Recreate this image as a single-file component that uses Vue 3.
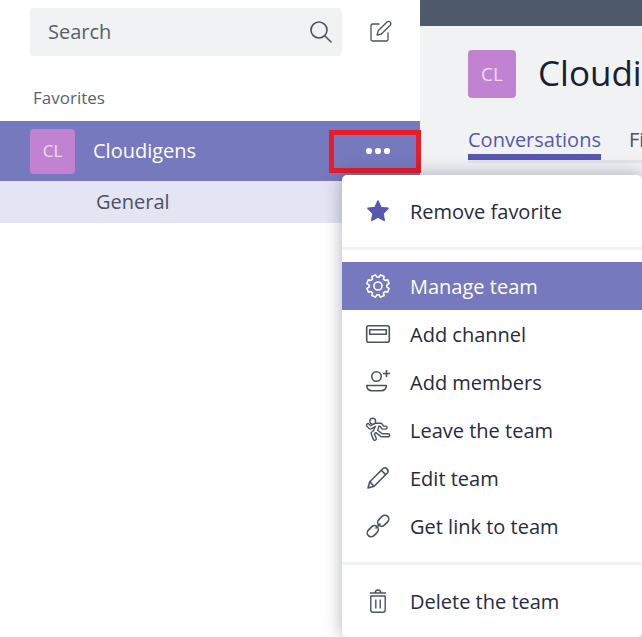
<script setup>
import { ref } from 'vue'

const query = ref('')
const active = ref('gear')

const groups = [
  [{ icon: 'star', label: 'Remove favorite' }],
  [
    { icon: 'gear', label: 'Manage team' },
    { icon: 'channel', label: 'Add channel' },
    { icon: 'members', label: 'Add members' },
    { icon: 'leave', label: 'Leave the team' },
    { icon: 'edit', label: 'Edit team' },
    { icon: 'link', label: 'Get link to team' },
  ],
  [{ icon: 'trash', label: 'Delete the team' }],
]

// Limbs of the running figure; stroked twice to get a hollow outline
const runnerPath =
  'M4 9.200L6.300 11.600L11.500 8.700L16.800 8.700L18.800 11.600L21.600 11.600M13.600 9.400L11.200 14.200L17.600 19.200L24.200 19.200M13.600 9.400L12 14.400L8.600 17.400L10.800 22.800'

// Eight-toothed cog outline around (14, 14)
const gearPath = (() => {
  const pts = []
  for (let i = 0; i < 8; i++) {
    const mid = 22.5 + i * 45
    for (const [offset, radius] of [[-15, 9], [-10, 11.4], [10, 11.4], [15, 9]]) {
      const a = ((mid + offset) * Math.PI) / 180
      pts.push(`${(14 + radius * Math.cos(a)).toFixed(2)} ${(14 + radius * Math.sin(a)).toFixed(2)}`)
    }
  }
  return `M${pts.join('L')}Z`
})()
</script>

<template>
  <div class="app">
    <aside class="sidebar">
      <div class="tools">
        <label class="search">
          <input v-model="query" type="text" placeholder="Search" aria-label="Search" />
          <svg width="24" height="24" viewBox="0 0 24 24">
            <circle cx="10" cy="10" r="8" />
            <path d="M15.8 15.8L22.5 22.5" />
          </svg>
        </label>
        <button class="compose" aria-label="New chat">
          <svg width="24" height="24" viewBox="0 0 24 24">
            <path d="M10.5 4H3.5Q2 4 2 5.500V19.500Q2 21 3.500 21H17.500Q19 21 19 19.500V12.500" />
            <path d="M8 15.200L9.200 10.800L18 2Q19.500 .8 21.200 2.100Q22.500 3.700 21.200 5.200L12.400 14Z" />
          </svg>
        </button>
      </div>
      <h2 class="section">Favorites</h2>
      <div class="team">
        <span class="avatar">CL</span>
        <span class="team-name">Cloudigens</span>
        <button class="more" aria-label="More options">
          <svg width="26" height="8" viewBox="0 0 26 8">
            <circle cx="4" cy="4" r="3.100" />
            <circle cx="13" cy="4" r="3.100" />
            <circle cx="22" cy="4" r="3.100" />
          </svg>
        </button>
      </div>
      <a class="channel" href="#general">General</a>
    </aside>

    <main class="content">
      <div class="topbar"></div>
      <header class="heading">
        <span class="avatar large">CL</span>
        <h1>Cloudigens</h1>
      </header>
      <nav class="tabs">
        <a class="tab current" href="#conversations">Conversations</a>
        <a class="tab" href="#files">Files</a>
      </nav>
    </main>

    <div class="menu" role="menu">
      <div v-for="(group, g) in groups" :key="g" class="group">
        <button
          v-for="item in group"
          :key="item.icon"
          class="item"
          :class="{ active: active === item.icon }"
          role="menuitem"
          @mouseenter="active = item.icon"
        >
          <svg width="28" height="28" viewBox="0 0 28 28">
            <path
              v-if="item.icon === 'star'"
              class="star"
              d="M14 4L17 10.600L24 11.400L18.900 16.400L20.200 23.400L14 20.100L7.800 23.400L9.100 16.400L4 11.400L11 10.600Z"
            />
            <g v-else-if="item.icon === 'gear'">
              <path :d="gearPath" />
              <circle cx="14" cy="14" r="4" />
            </g>
            <g v-else-if="item.icon === 'channel'">
              <rect x="2.700" y="5.700" width="22.600" height="16.600" rx="2" />
              <rect x="5.700" y="9.700" width="16.600" height="4.600" />
            </g>
            <g v-else-if="item.icon === 'members'">
              <circle cx="12.500" cy="8.500" r="4.700" />
              <path d="M19 5.500H26M22.500 2V9" />
              <path d="M2.800 17.500H22.200Q22.200 22.700 17 22.700H8Q2.800 22.700 2.800 17.500Z" />
            </g>
            <g v-else-if="item.icon === 'leave'">
              <path class="limb" :d="runnerPath" />
              <path class="limb hollow" :d="runnerPath" />
              <circle class="head" cx="8.700" cy="5.200" r="2.900" />
            </g>
            <g v-else-if="item.icon === 'edit'">
              <path d="M4 24L5.800 17.800L19.300 4.300Q21.200 3 23 4.900Q24.900 6.800 23.600 8.700L10.100 22.200Z" />
              <path d="M17.300 6.300L21.600 10.600M5.800 17.800L10.100 22.200" />
            </g>
            <g v-else-if="item.icon === 'link'">
              <rect x="-6.200" y="-3.900" width="12.400" height="7.800" rx="3.900" transform="translate(8.800 19.200) rotate(-45)" />
              <rect x="-6.200" y="-3.900" width="12.400" height="7.800" rx="3.900" transform="translate(19.200 8.800) rotate(-45)" />
              <path d="M11.500 16.500L16.500 11.500" />
            </g>
            <g v-else class="fine">
              <path d="M6 6H22M11.200 6Q11.200 3 14 3Q16.800 3 16.800 6" />
              <path d="M6.800 9H21.200V23Q21.200 25.300 19 25.300H9Q6.800 25.300 6.800 23Z" />
              <path d="M11.800 12.500V21.500M16.200 12.500V21.500" />
            </g>
          </svg>
          <span>{{ item.label }}</span>
        </button>
      </div>
    </div>
  </div>
</template>

<style>
body {
  margin: 0;
}
</style>

<style scoped>
.app {
  position: relative;
  display: flex;
  min-height: 100vh;
  overflow: hidden;
  background: #fff;
  color: #4b5263;
  font-family: "Segoe UI", "Open Sans", "Noto Sans", sans-serif;
  font-size: 20px;
  line-height: 24px;
}

button {
  padding: 0;
  border: 0;
  background: none;
  color: inherit;
  font: inherit;
  cursor: pointer;
}

a {
  color: inherit;
  text-decoration: none;
}

svg {
  display: block;
  flex: none;
  fill: none;
  stroke: #4b5263;
  stroke-width: 1.6;
  stroke-linejoin: round;
}

.sidebar {
  flex: 0 0 420px;
}

.tools {
  display: flex;
  align-items: center;
  gap: 27px;
  padding: 8px 27px 0 30px;
}

.search {
  display: flex;
  flex: 1;
  align-items: center;
  height: 48px;
  padding: 0 9px 0 18px;
  border-radius: 4px;
  background: #f0f2f4;
}

.search input {
  flex: 1;
  min-width: 0;
  padding: 0;
  border: 0;
  outline: 0;
  background: none;
  color: inherit;
  font: inherit;
}

.search input::placeholder {
  color: #585f6d;
  opacity: 1;
}

.compose svg {
  stroke-width: 1.3;
}

.section {
  margin: 30px 0 11px;
  padding-left: 33px;
  font-size: 17px;
  font-weight: 400;
  color: #5c626e;
}

.team {
  display: flex;
  align-items: center;
  height: 60px;
  padding-left: 30px;
  background: #7679bd;
  color: #fff;
}

.avatar {
  display: flex;
  flex: none;
  align-items: center;
  justify-content: center;
  width: 45px;
  height: 45px;
  border-radius: 4px;
  background: #c183d1;
  color: #f0daf5;
  font-size: 17px;
}

.team-name {
  flex: 1;
  margin-left: 18px;
}

.more {
  display: flex;
  align-items: center;
  justify-content: center;
  width: 92px;
  height: 43px;
  margin-right: -1px;
  border: 5px solid #e81d27;
  z-index: 1;
  padding-left: 6px;
}

.more svg {
  fill: #fff;
  stroke: none;
}

.channel {
  display: block;
  padding: 9px 0 9px 96px;
  background: #e4e4f2;
}

.content {
  flex: 1;
  min-width: 0;
  background: #f0f2f4;
}

.topbar {
  height: 26px;
  background: #4e5969;
}

.heading {
  display: flex;
  align-items: flex-start;
  gap: 22px;
  padding: 24px 0 0 48px;
}

.large {
  width: 48px;
  height: 48px;
  font-size: 19px;
}

h1 {
  margin: 0;
  color: #182034;
  font-size: 35px;
  font-weight: 400;
  line-height: 46px;
}

.tabs {
  display: flex;
  gap: 28px;
  margin: 32px 0 0 48px;
  border-bottom: 3px solid #e4e5eb;
}

.heading + .tabs {
  margin-top: 30px;
}

.tab {
  padding-bottom: 8px;
}

.current {
  padding-bottom: 2px;
  border-bottom: 6px solid #5558af;
  color: #5558af;
}

.menu {
  position: absolute;
  top: 175px;
  left: 342px;
  width: 300px;
  border-radius: 5px;
  background: #fff;
  box-shadow: 0 0 18px rgba(30, 35, 70, 0.35);
  color: #252b40;
  z-index: 2;
}

.group {
  padding: 12px 0;
}

.group + .group {
  border-top: 3px solid #f0f1f3;
}

.item {
  display: flex;
  align-items: center;
  gap: 18px;
  width: 100%;
  height: 48px;
  padding: 2px 0 0 22px;
  text-align: left;
}

.item svg {
  margin-bottom: 2px;
}

.item.active {
  background: #7679bd;
  color: #fff;
}

.item.active svg {
  stroke: #fff;
}

.item .star {
  fill: #5558af;
  stroke: #5558af;
}

.limb {
  stroke-width: 4.4;
  stroke-linecap: round;
}

.limb.hollow {
  stroke: #fff;
  stroke-width: 1.6;
}

.head {
  fill: #fff;
  stroke-width: 1.4;
}

.item.active .hollow {
  stroke: #7679bd;
}

.item.active .head {
  fill: #7679bd;
}

.fine {
  stroke-width: 1.4;
}
</style>
